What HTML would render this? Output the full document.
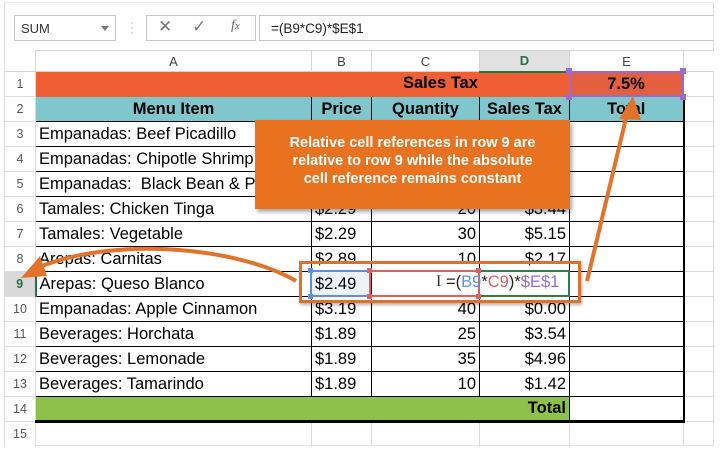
<!DOCTYPE html>
<html><head><meta charset="utf-8"><style>
*{margin:0;padding:0;box-sizing:border-box}
body{width:726px;height:456px;background:#fff;position:relative;overflow:hidden;font-family:"Liberation Sans",sans-serif}
.abs{position:absolute}
table{position:absolute;left:4px;top:50px;border-collapse:collapse;table-layout:fixed}
td{border:1px solid #dadada;height:25px;font-size:16.5px;color:#000;padding:0 3px;white-space:nowrap;overflow:hidden}
tr.h td{height:21px;font-size:13px;color:#444;text-align:center;background:#fff;border-color:#d4d4d4}
td.rh{font-size:12.5px;color:#555;text-align:center;background:#fff;border-color:#dcdcdc;padding:0}
td.d{border:1px solid #000}
td.r{text-align:right}
td.o{background:#F05E34;border-color:#F05E34;font-weight:bold}
td.t{background:#80C6CD;border:1px solid #000;font-weight:bold;text-align:center}
td.g{background:#8DC14A;border-color:#8DC14A;font-weight:bold}
td.eR{border-right:2px solid #000}
tr.r14 td.x{border-bottom:3px solid #000}
</style></head><body>
<div class="abs" style="left:4px;top:2px;width:710px;height:444px;border:1px solid #e0e0e0;border-top-color:#eee"></div>
<div class="abs" style="left:14px;top:15px;width:102px;height:26px;border:1px solid #c6c6c6;font-size:13px;color:#333;padding:5px 0 0 6px">SUM<span class="abs" style="left:86px;top:10px;width:0;height:0;border-left:4px solid transparent;border-right:4px solid transparent;border-top:5px solid #777"></span></div>
<div class="abs" style="left:130px;top:20px;color:#aaa;font-size:12px;line-height:5px">·<br>·<br>·</div>
<div class="abs" style="left:146px;top:15px;width:110px;height:26px;border:1px solid #c6c6c6"></div>
<div class="abs" style="left:158px;top:17px;font-size:17px;color:#777">✕</div>
<div class="abs" style="left:192px;top:17px;font-size:17px;color:#777">✓</div>
<div class="abs" style="left:231px;top:18px;font-size:14px;color:#666;font-style:italic;font-family:'Liberation Serif',serif">f<span style="font-size:11px">x</span></div>
<div class="abs" style="left:259px;top:15px;width:454px;height:26px;border:1px solid #c6c6c6;border-right:none;font-size:13.5px;color:#222;padding:5px 0 0 11px">=(B9*C9)*$E$1</div>
<div class="abs" style="left:8px;top:55px;width:0;height:0;border-left:14px solid transparent;border-bottom:14px solid #ddd"></div>

<table>
<colgroup><col style="width:31px"><col style="width:276px"><col style="width:60px"><col style="width:108px"><col style="width:90px"><col style="width:114px"><col style="width:30px"></colgroup>
<tr class="h"><td style="border-left:none;border-top:none"></td><td>A</td><td>B</td><td>C</td><td style="background:#e1e1e1;border-bottom:2px solid #217346;color:#217346;font-weight:bold">D</td><td>E</td><td style="border-right:none"></td></tr>
<tr><td class="rh">1</td><td class="o"></td><td class="o"></td><td class="o"></td><td class="o"></td><td style="background:#E2603F;border-color:#E2603F"></td><td></td></tr>
<tr><td class="rh">2</td><td class="t">Menu Item</td><td class="t">Price</td><td class="t">Quantity</td><td class="t">Sales Tax</td><td class="t eR">Total</td><td></td></tr>
<tr><td class="rh">3</td><td class="d">Empanadas: Beef Picadillo</td><td class="d r"></td><td class="d r"></td><td class="d r"></td><td class="d eR"></td><td></td></tr>
<tr><td class="rh">4</td><td class="d">Empanadas: Chipotle Shrimp</td><td class="d r"></td><td class="d r"></td><td class="d r"></td><td class="d eR"></td><td></td></tr>
<tr><td class="rh">5</td><td class="d">Empanadas:&nbsp; Black Bean &amp; Plantain</td><td class="d r"></td><td class="d r"></td><td class="d r"></td><td class="d eR"></td><td></td></tr>
<tr><td class="rh">6</td><td class="d">Tamales: Chicken Tinga</td><td class="d">$2.29</td><td class="d r">20</td><td class="d r">$3.44</td><td class="d eR"></td><td></td></tr>
<tr><td class="rh">7</td><td class="d">Tamales: Vegetable</td><td class="d">$2.29</td><td class="d r">30</td><td class="d r">$5.15</td><td class="d eR"></td><td></td></tr>
<tr><td class="rh">8</td><td class="d">Arepas: Carnitas</td><td class="d">$2.89</td><td class="d r">10</td><td class="d r">$2.17</td><td class="d eR"></td><td></td></tr>
<tr><td class="rh" style="background:#d8d8d8;color:#217346;font-weight:bold;border-right:2px solid #217346">9</td><td class="d">Arepas: Queso Blanco</td><td class="d" style="background:#eef3fb">$2.49</td><td class="d"></td><td class="d"></td><td class="d eR"></td><td></td></tr>
<tr><td class="rh">10</td><td class="d">Empanadas: Apple Cinnamon</td><td class="d">$3.19</td><td class="d r">40</td><td class="d r">$0.00</td><td class="d eR"></td><td></td></tr>
<tr><td class="rh">11</td><td class="d">Beverages: Horchata</td><td class="d">$1.89</td><td class="d r">25</td><td class="d r">$3.54</td><td class="d eR"></td><td></td></tr>
<tr><td class="rh">12</td><td class="d">Beverages: Lemonade</td><td class="d">$1.89</td><td class="d r">35</td><td class="d r">$4.96</td><td class="d eR"></td><td></td></tr>
<tr><td class="rh">13</td><td class="d">Beverages: Tamarindo</td><td class="d">$1.89</td><td class="d r">10</td><td class="d r">$1.42</td><td class="d eR"></td><td></td></tr>
<tr class="r14"><td class="rh">14</td><td class="g x"></td><td class="g x"></td><td class="g x"></td><td class="g x r" style="border-right:1px solid #000">Total</td><td class="d eR x"></td><td></td></tr>
<tr><td class="rh" style="height:19px;border-bottom:none">15</td><td style="border-bottom:none"></td><td style="border-bottom:none"></td><td style="border-bottom:none"></td><td style="border-bottom:none"></td><td style="border-bottom:none"></td><td style="border-bottom:none;border-right:none"></td></tr>
</table>

<div class="abs" style="left:403px;top:74px;font-size:16.5px;font-weight:bold">Sales Tax</div>
<div class="abs" style="left:569px;top:71px;width:114px;height:26px;border:2px solid #9A6BCB;font-size:16.5px;font-weight:bold;text-align:center;line-height:22px">7.5%</div>
<div class="abs" style="left:566px;top:68px;width:6px;height:6px;background:#9A6BCB"></div>
<div class="abs" style="left:680px;top:68px;width:6px;height:6px;background:#9A6BCB"></div>
<div class="abs" style="left:566px;top:94px;width:6px;height:6px;background:#9A6BCB"></div>
<div class="abs" style="left:680px;top:94px;width:6px;height:6px;background:#9A6BCB"></div>

<div class="abs" style="left:310px;top:270px;width:61px;height:27px;border:2px solid #5B8DEF"></div>
<div class="abs" style="left:369px;top:270px;width:111px;height:27px;border:2px solid #E35F5F"></div>
<div class="abs" style="left:479px;top:270px;width:91px;height:27px;border:2px solid #2E7D4A;border-left:none"></div>
<div class="abs" style="left:308px;top:268px;width:5px;height:5px;background:#5B8DEF"></div>
<div class="abs" style="left:308px;top:294px;width:5px;height:5px;background:#5B8DEF"></div>
<div class="abs" style="left:367px;top:268px;width:5px;height:5px;background:#E35F5F"></div>
<div class="abs" style="left:367px;top:294px;width:5px;height:5px;background:#E35F5F"></div>
<div class="abs" style="left:476px;top:268px;width:5px;height:5px;background:#E35F5F"></div>
<div class="abs" style="left:476px;top:294px;width:5px;height:5px;background:#E35F5F"></div>
<div class="abs" style="left:436px;top:273px;font-size:16px;color:#333;font-family:'Liberation Serif',serif">I</div>
<div class="abs" style="left:446px;top:273px;font-size:16.5px;color:#222">=(<span style="color:#5B8DEF">B9</span>*<span style="color:#E35F5F">C9</span>)*<span style="color:#9A6BCB">$E$1</span></div>
<div class="abs" style="left:299px;top:261px;width:282px;height:42px;border:3px solid #E0702A;box-shadow:1px 2px 3px rgba(0,0,0,.3)"></div>

<div class="abs" style="left:255px;top:120px;width:315px;height:89px;background:#E8721F;box-shadow:2px 3px 4px rgba(0,0,0,.35);color:#fff;font-weight:bold;font-size:14.5px;line-height:18px;text-align:center;padding-top:14px">Relative cell references in row 9 are<br>relative to row 9 while the absolute<br>cell reference remains constant</div>

<svg class="abs" style="left:0;top:0" width="726" height="456">
<path d="M296,281 C240,248 120,236 42,266" fill="none" stroke="#E2732B" stroke-width="4"/>
<polygon points="21,278 40,256 47,276" fill="#E2732B"/>
<line x1="587" y1="281" x2="627" y2="114" stroke="#E2732B" stroke-width="4"/>
<polygon points="633,96 619,119 641,120" fill="#E2732B"/>
</svg>
</body></html>
